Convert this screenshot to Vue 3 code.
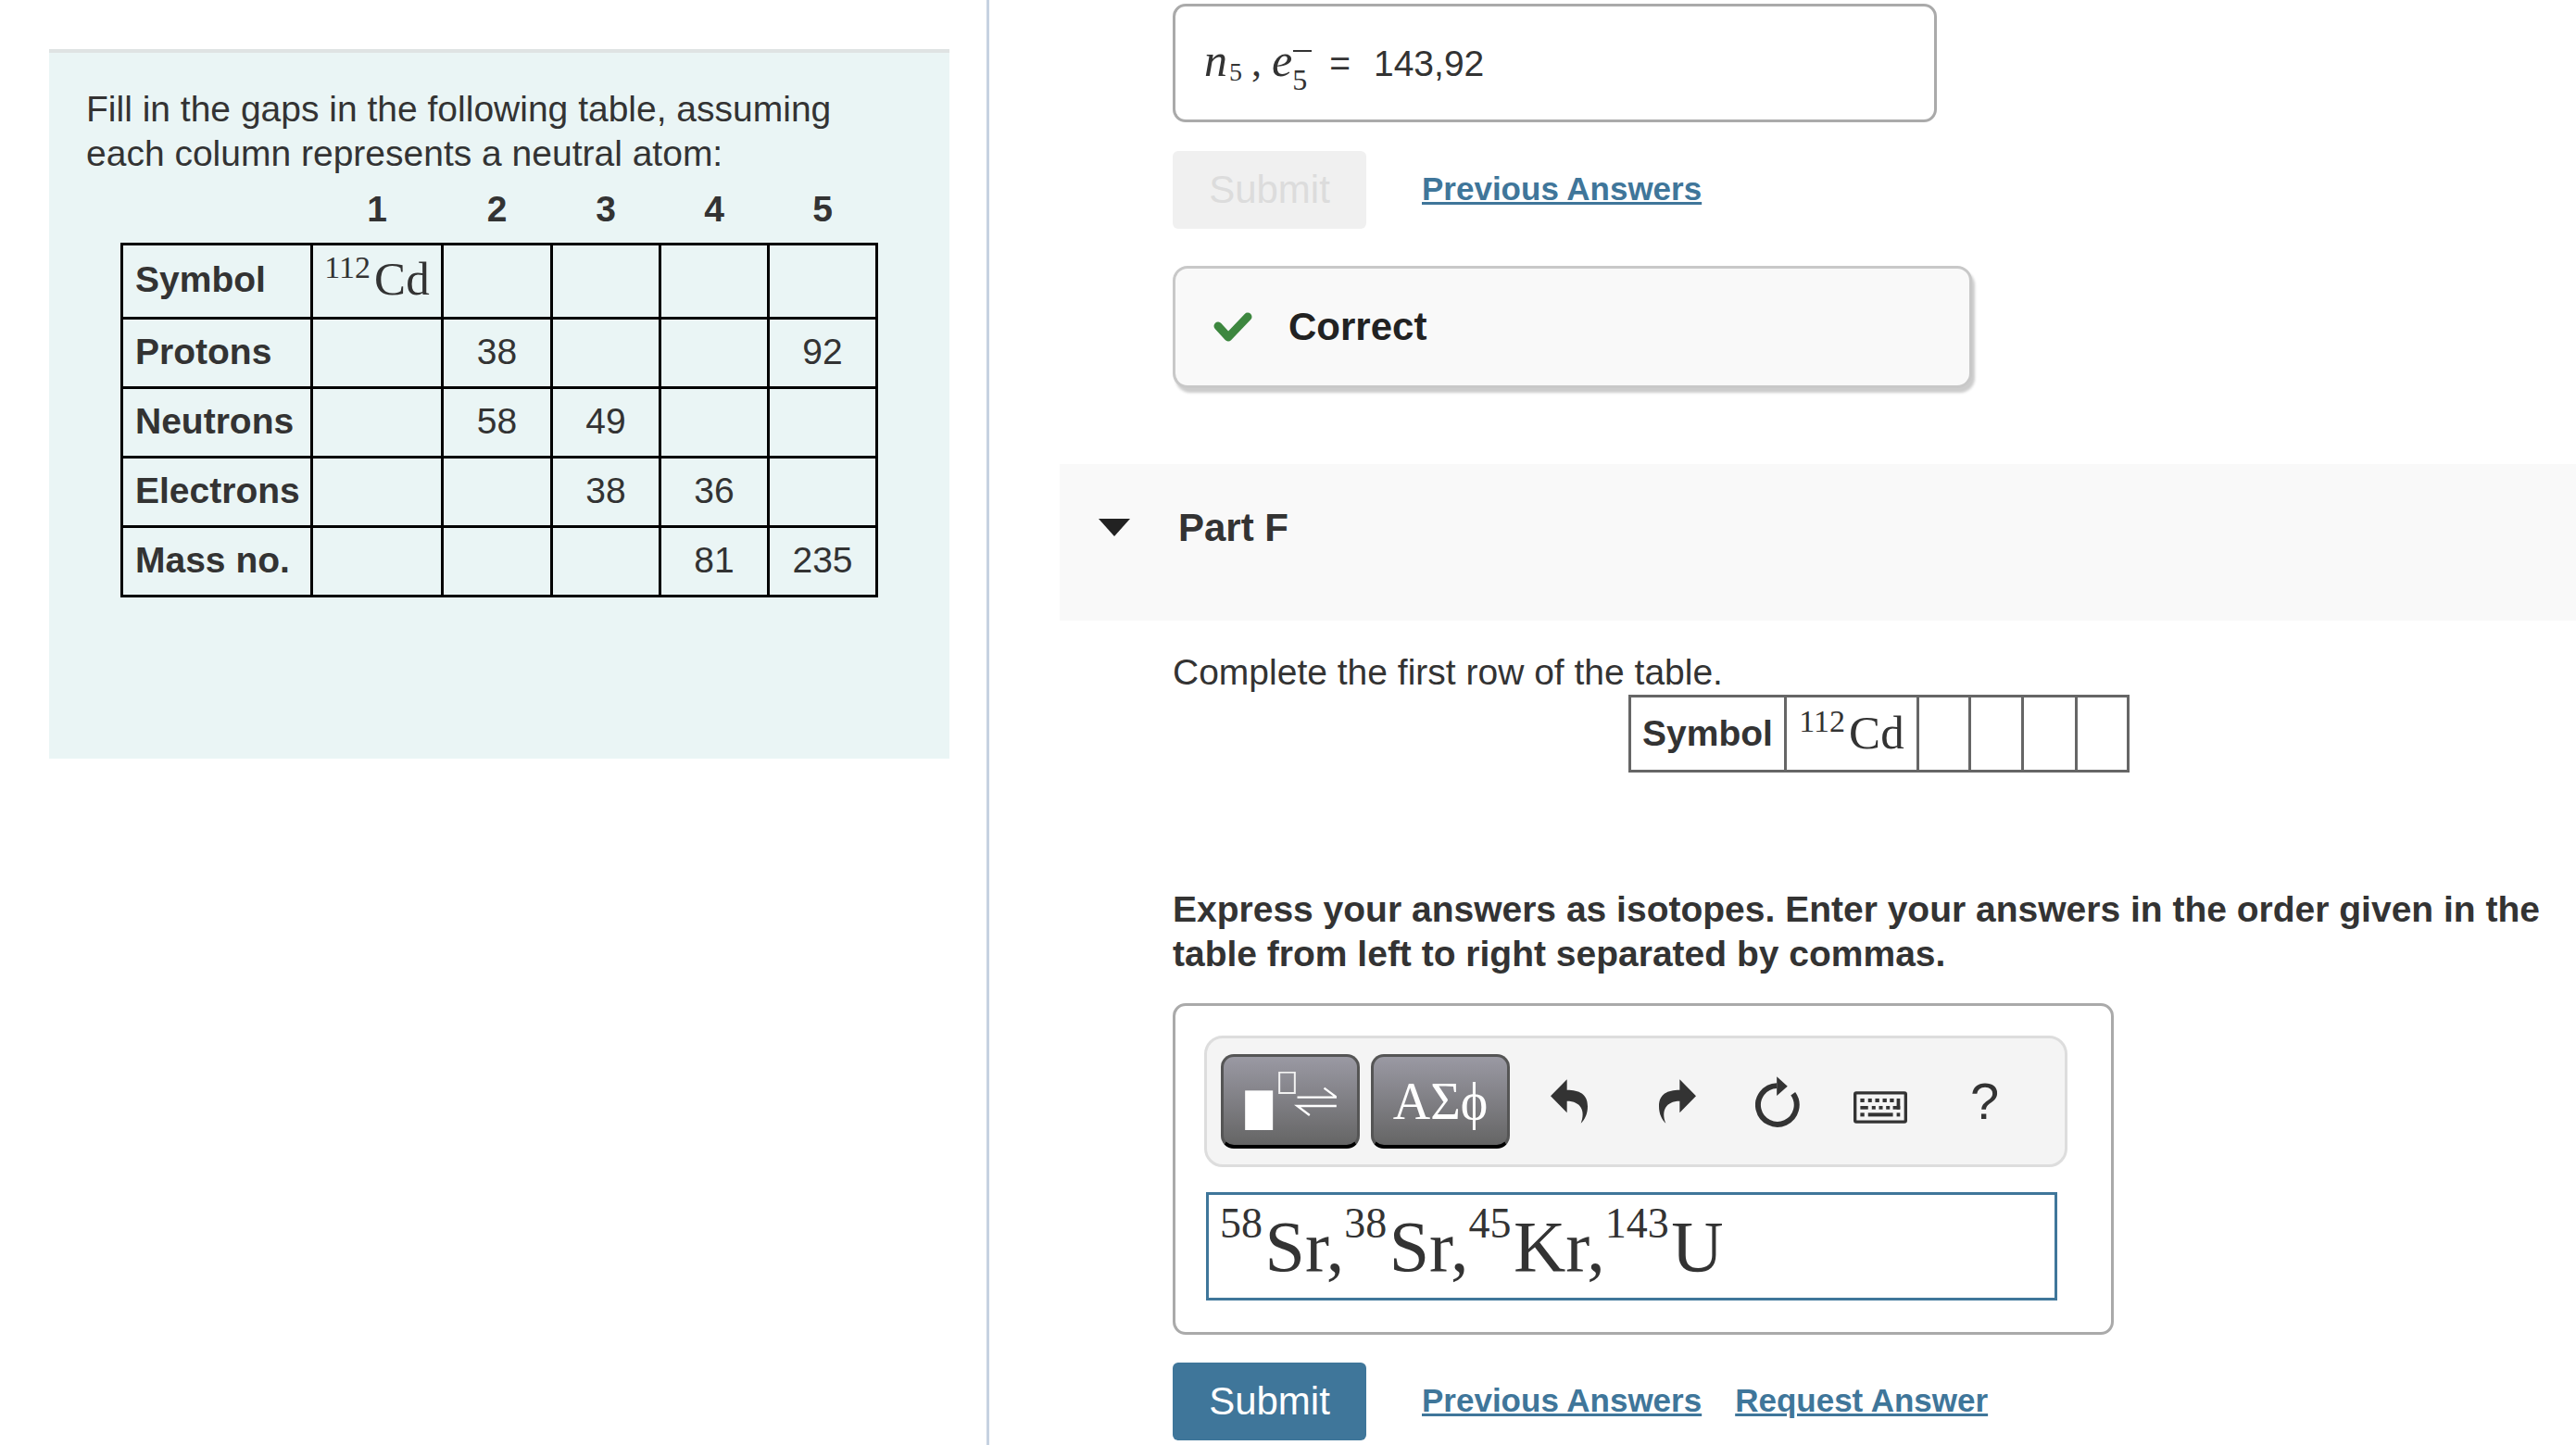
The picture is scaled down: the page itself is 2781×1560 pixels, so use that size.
<template>
  <div class="page">
    <section class="left">
      <div class="panel">
        <p class="intro">Fill in the gaps in the following table, assuming<br />each column represents a neutral atom:</p>
        <table class="gaps">
          <colgroup>
            <col v-for="(w, i) in gapCols" :key="i" :style="{ width: w + 'px' }" />
          </colgroup>
          <thead>
            <tr>
              <th></th>
              <th v-for="n in 5" :key="n">{{ n }}</th>
            </tr>
          </thead>
          <tbody>
            <tr>
              <th class="label">Symbol</th>
              <td><span class="iso"><span class="iso-mass">112</span>Cd</span></td>
              <td></td><td></td><td></td><td></td>
            </tr>
            <tr v-for="row in rows" :key="row.label">
              <th class="label">{{ row.label }}</th>
              <td v-for="(val, i) in row.values" :key="i">{{ val }}</td>
            </tr>
          </tbody>
        </table>
      </div>
    </section>

    <section class="right">
      <div class="content">
        <div class="answer-box">
          <span class="math">
            <i>n</i><span class="math-sub">5</span><span class="math-comma">,</span><i class="math-e">e</i><span class="math-stack"><span class="math-minus"></span><span class="math-sub-low">5</span></span>
          </span>
          <span class="math-eq">=</span>
          <span class="math-value">143,92</span>
        </div>

        <div class="actions first">
          <button class="submit disabled" type="button">Submit</button>
          <a class="link" href="#">Previous Answers</a>
        </div>

        <div class="correct">
          <svg class="check" width="42" height="32" viewBox="0 0 42 32">
            <path d="M5 15 L16 27 L37 5" fill="none" stroke="#3d873f" stroke-width="9" stroke-linecap="round" stroke-linejoin="round" />
          </svg>
          <span>Correct</span>
        </div>
      </div>

      <div class="part-band">
        <span class="caret"></span>
        <h2>Part F</h2>
      </div>

      <div class="content">
        <p class="complete">Complete the first row of the table.</p>
        <table class="first-row">
          <colgroup>
            <col v-for="(w, i) in rowCols" :key="i" :style="{ width: w + 'px' }" />
          </colgroup>
          <tbody>
            <tr>
              <th>Symbol</th>
              <td><span class="iso"><span class="iso-mass">112</span>Cd</span></td>
              <td></td><td></td><td></td><td></td>
            </tr>
          </tbody>
        </table>

        <p class="express">Express your answers as isotopes. Enter your answers in the order given in the table from left to right separated by commas.</p>

        <div class="editor">
          <div class="toolbar">
            <button class="tool" type="button">
              <svg width="99" height="63" viewBox="129 107 296 189">
                <rect x="129" y="168" width="90" height="128" fill="#fff" />
                <rect x="240" y="109" width="50" height="67" fill="none" stroke="#f2f2f2" stroke-width="6" />
                <path d="M298 190 H425 L385 160 M425 218 H298 L338 248" fill="none" stroke="#fff" stroke-width="7" />
              </svg>
            </button>
            <button class="tool greek" type="button">ΑΣϕ</button>

            <svg class="undo" width="40" height="48" viewBox="72 102 120 143">
              <path d="M72 156 L125 102 V137 C165 137 192 150 192 190 C192 215 182 233 170 245 C186 205 170 173 125 173 V210 Z" fill="#333" />
            </svg>
            <svg class="redo" width="40" height="48" viewBox="72 102 120 143">
              <path d="M192 156 L139 102 V137 C99 137 72 150 72 190 C72 215 82 233 94 245 C78 205 94 173 139 173 V210 Z" fill="#333" />
            </svg>
            <svg class="reset" width="48" height="55" viewBox="735 92 145 165">
              <path d="M805 122 A63 63 0 1 0 858 148" fill="none" stroke="#333" stroke-width="18" />
              <path d="M805 92 L840 124 L805 155 Z" fill="#333" />
            </svg>
            <svg class="keyboard" width="58" height="35" viewBox="1053 145 173 103">
              <rect x="1058" y="150" width="163" height="93" rx="4" fill="none" stroke="#333" stroke-width="10" />
              <g fill="#333">
                <rect v-for="k in keys" :key="k[0] + '-' + k[1]" :x="k[0]" :y="k[1]" :width="k[2]" :height="k[3]" />
              </g>
            </svg>
            <span class="help">?</span>
          </div>

          <div class="formula">
            <template v-for="(item, i) in isotopes" :key="i">
              <span class="formula-mass">{{ item.mass }}</span><span>{{ item.text }}</span>
            </template>
          </div>
        </div>

        <div class="actions">
          <button class="submit" type="button">Submit</button>
          <a class="link" href="#">Previous Answers</a>
          <a class="link second" href="#">Request Answer</a>
        </div>
      </div>
    </section>
  </div>
</template>

<script setup>
const gapCols = [205, 141, 118, 117, 117, 117]
const rowCols = [168, 143, 56, 57, 58, 56]

const rows = [
  { label: 'Protons', values: ['', '38', '', '', '92'] },
  { label: 'Neutrons', values: ['', '58', '49', '', ''] },
  { label: 'Electrons', values: ['', '', '38', '36', ''] },
  { label: 'Mass no.', values: ['', '', '', '81', '235'] }
]

const isotopes = [
  { mass: '58', text: 'Sr,' },
  { mass: '38', text: 'Sr,' },
  { mass: '45', text: 'Kr,' },
  { mass: '143', text: 'U' }
]

// keyboard keys: x, y, width, height in the icon's viewBox
const keys = [
  [1075, 168, 13, 12], [1100, 168, 12, 12], [1123, 168, 13, 12], [1147, 168, 13, 12], [1170, 168, 13, 12],
  [1192, 168, 11, 35], [1180, 192, 23, 11],
  [1075, 192, 25, 11], [1112, 192, 12, 11], [1135, 192, 12, 11], [1158, 192, 12, 11],
  [1075, 214, 13, 12], [1100, 214, 80, 12], [1192, 214, 11, 12]
]
</script>

<style>
html, body {
  margin: 0;
  background: #fff;
}
</style>

<style scoped>
.page {
  display: flex;
  width: 2781px;
  height: 1560px;
  overflow: hidden;
  background: #fff;
  color: #333;
  font-family: "Liberation Sans", Arial, sans-serif;
  font-size: 39px;
  line-height: 48px;
}

p {
  margin: 0;
}

.left {
  flex-shrink: 0;
  box-sizing: border-box;
  width: 1068px;
  height: 100%;
  padding: 53px 40px 0 53px;
  border-right: 3px solid #c6d2e1;
}

.panel {
  width: 972px;
  height: 766px;
  box-sizing: border-box;
  padding: 37px 40px 0;
  background: #eaf5f5;
  border-top: 4px solid #dfe3e3;
}

.gaps {
  margin-left: 37px;
  border-collapse: collapse;
  table-layout: fixed;
  width: 815px;
}

.gaps thead th {
  height: 72px;
  padding: 0;
  font-weight: bold;
}

.gaps tbody td,
.gaps tbody th {
  box-sizing: border-box;
  border: 3px solid #000;
  height: 75px;
  padding: 0 0 3px;
  text-align: center;
}

.gaps tbody tr:first-child td,
.gaps tbody tr:first-child th {
  height: 80px;
}

.gaps tbody th.label {
  text-align: left;
  padding-left: 13px;
}

.iso {
  position: relative;
  top: 2px;
  font-family: "Liberation Serif", "Times New Roman", serif;
  font-size: 51px;
  white-space: nowrap;
}

.iso-mass {
  font-size: 34px;
  position: relative;
  top: -18px;
  margin-right: 4px;
}

.right {
  flex: 1;
  min-width: 0;
  padding-top: 4px;
}

.content {
  margin-left: 198px;
}

.answer-box {
  box-sizing: border-box;
  width: 825px;
  height: 128px;
  padding: 34px 0 0 31px;
  display: flex;
  align-items: baseline;
  background: #fff;
  border: 3px solid #aaa;
  border-radius: 14px;
}

.math {
  position: relative;
  display: inline-flex;
  align-items: baseline;
  font-family: "Liberation Serif", "Times New Roman", serif;
  font-size: 50px;
}

.math-sub {
  font-size: 28px;
  position: relative;
  top: 5px;
  margin-left: 2px;
}

.math-comma {
  margin-left: 10px;
  font-size: 44px;
}

.math-e {
  margin-left: 11px;
}

.math-stack {
  position: relative;
  display: inline-block;
  width: 22px;
  height: 10px;
}

.math-minus {
  position: absolute;
  left: 1px;
  top: -18px;
  width: 20px;
  height: 2px;
  background: #333;
}

.math-sub-low {
  position: absolute;
  left: 0;
  top: -10px;
  font-size: 32px;
}

.math-eq {
  margin-left: 18px;
}

.math-value {
  margin-left: 25px;
}

.actions {
  display: flex;
  align-items: center;
  height: 84px;
  margin-top: 30px;
}

.actions.first {
  margin-top: 31px;
}

.submit {
  width: 209px;
  height: 84px;
  padding: 0;
  border: none;
  border-radius: 6px;
  background: #3f769a;
  color: #fff;
  font-family: inherit;
  font-size: 42px;
}

.submit.disabled {
  background: #f0f0f0;
  color: #dcdcdc;
}

.link {
  margin-left: 60px;
  margin-bottom: 3px;
  color: #3f769a;
  font-size: 35px;
  font-weight: bold;
  text-decoration: underline;
  white-space: nowrap;
}

.link.second {
  margin-left: 36px;
}

.correct {
  box-sizing: border-box;
  width: 863px;
  height: 132px;
  margin-top: 40px;
  padding-left: 41px;
  display: flex;
  align-items: center;
  background: #f9f9f9;
  border: 3px solid #c8c8c8;
  border-radius: 16px;
  box-shadow: 3px 5px 3px #ccc;
  color: #222;
  font-size: 42px;
  font-weight: bold;
}

.check {
  margin-right: 39px;
}

.part-band {
  display: flex;
  align-items: center;
  box-sizing: border-box;
  height: 169px;
  margin: 82px 0 0 76px;
  padding: 0 0 32px 42px;
  background: #f9f9f9;
}

.caret {
  width: 0;
  height: 0;
  border-left: 17px solid transparent;
  border-right: 17px solid transparent;
  border-top: 19px solid #222;
}

.part-band h2 {
  margin: 0 0 0 52px;
  font-size: 42px;
  font-weight: bold;
  color: #333;
}

.complete {
  margin-top: 32px;
}

.first-row {
  margin-left: 492px;
  border-collapse: collapse;
  table-layout: fixed;
  width: 540px;
}

.first-row th,
.first-row td {
  height: 78px;
  padding: 0;
  border: 3px solid #666;
  text-align: center;
}

.express {
  width: 1500px;
  margin-top: 124px;
  font-weight: bold;
}

.editor {
  box-sizing: border-box;
  width: 1016px;
  height: 358px;
  margin-top: 29px;
  padding: 32px 31px 0;
  border: 3px solid #aaa;
  border-radius: 14px;
}

.toolbar {
  box-sizing: border-box;
  display: flex;
  align-items: center;
  width: 932px;
  height: 142px;
  padding-left: 15px;
  background: #f4f4f4;
  border: 3px solid #ddd;
  border-radius: 20px;
}

.tool {
  box-sizing: border-box;
  display: flex;
  align-items: center;
  justify-content: center;
  width: 150px;
  height: 102px;
  padding: 0;
  margin-right: 12px;
  background: linear-gradient(#9a99a3, #656565);
  border: 3px solid #555;
  border-bottom: 4px solid #000;
  border-radius: 14px;
  color: #fff;
}

.greek {
  margin-right: 0;
  font-family: "Liberation Serif", "Times New Roman", serif;
  font-size: 56px;
}

.undo {
  margin-left: 44px;
}

.redo {
  margin-left: 77px;
}

.reset {
  margin-left: 64px;
}

.keyboard {
  margin-left: 58px;
  margin-top: 13px;
}

.help {
  margin-left: 68px;
  font-size: 56px;
  color: #333;
}

.formula {
  box-sizing: border-box;
  display: flex;
  align-items: baseline;
  width: 919px;
  height: 117px;
  margin: 27px 0 0 2px;
  padding: 18px 0 0 12px;
  border: 3px solid #3f769a;
  font-family: "Liberation Serif", "Times New Roman", serif;
  font-size: 78px;
  line-height: 76px;
}

.formula-mass {
  position: relative;
  top: -36px;
  font-size: 46px;
  line-height: 44px;
  margin-right: 2.5px;
}
</style>
